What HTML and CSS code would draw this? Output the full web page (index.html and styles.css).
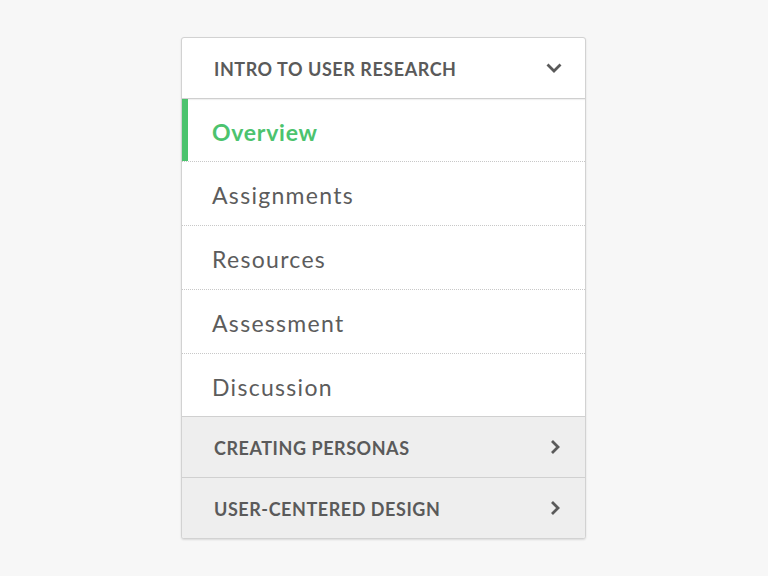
FILE: index.html
```html
<!DOCTYPE html>
<html>
<head>
<meta charset="utf-8">
<link rel="stylesheet" href="styles.css">
</head>
<body>
<nav class="card">
  <div class="section open">
    <span class="section-title">INTRO TO USER RESEARCH</span>
    <svg class="chev" width="16" height="10" viewBox="0 0 16 10"><path d="M1.5 1.5 L8 8 L14.5 1.5" fill="none" stroke="#5a5a5a" stroke-width="2.8"/></svg>
  </div>
  <ul class="items">
    <li class="item active">Overview</li>
    <li class="item">Assignments</li>
    <li class="item">Resources</li>
    <li class="item">Assessment</li>
    <li class="item last">Discussion</li>
  </ul>
  <div class="section closed">
    <span class="section-title">CREATING PERSONAS</span>
    <svg class="chev-r" width="10" height="16" viewBox="0 0 10 16"><path d="M2 2 L8 8 L2 14" fill="none" stroke="#5a5a5a" stroke-width="2.8"/></svg>
  </div>
  <div class="section closed">
    <span class="section-title">USER-CENTERED DESIGN</span>
    <svg class="chev-r" width="10" height="16" viewBox="0 0 10 16"><path d="M2 2 L8 8 L2 14" fill="none" stroke="#5a5a5a" stroke-width="2.8"/></svg>
  </div>
</nav>
</body>
</html>
```
FILE: styles.css
```css
* { box-sizing: border-box; }
html, body { margin: 0; padding: 0; }
body {
  background: #f7f7f7;
  font-family: Lato, "Open Sans", Arial, sans-serif;
  color: #5a5a5a;
  height: 576px;
  padding: 37px 0 0 181px;
}
.card {
  width: 405px;
  border: 1px solid #d2d2d2;
  border-radius: 3px;
  background: #fff;
  box-shadow: 0 1px 2px rgba(0,0,0,0.12);
  overflow: hidden;
}
.section {
  display: flex;
  align-items: center;
  justify-content: space-between;
  height: 61px;
  padding: 2px 22px 0 32px;
}
.section.open {
  height: 61px;
  border-bottom: 1px solid #cfcfcf;
  box-shadow: 0 1px 1px rgba(0,0,0,0.06);
}
.section.closed {
  background: #eeeeee;
  border-top: 1px solid #d0d0d0;
}
.section-title {
  font-weight: 700;
  font-size: 18px;
  letter-spacing: 0.55px;
  color: #5a5a5a;
}
.chev { margin-right: 1px; margin-top: -2px; }
.chev-r { margin-right: 3px; margin-top: -2px; }
.items {
  list-style: none;
  margin: 0;
  padding: 0;
}
.item {
  height: 64px;
  display: flex;
  align-items: center;
  padding: 3px 0 0 30px;
  font-size: 23px;
  letter-spacing: 1.3px;
  color: #5c5c5c;
  border-bottom: 1px dotted #c8c8c8;
}
.item.active {
  height: 63px;
  color: #4cc36e;
  font-weight: 700;
  letter-spacing: 0.75px;
  box-shadow: inset 6px 0 0 #4cc36e;
}
.item.last {
  border-bottom: none;
  height: 62px;
}
```
